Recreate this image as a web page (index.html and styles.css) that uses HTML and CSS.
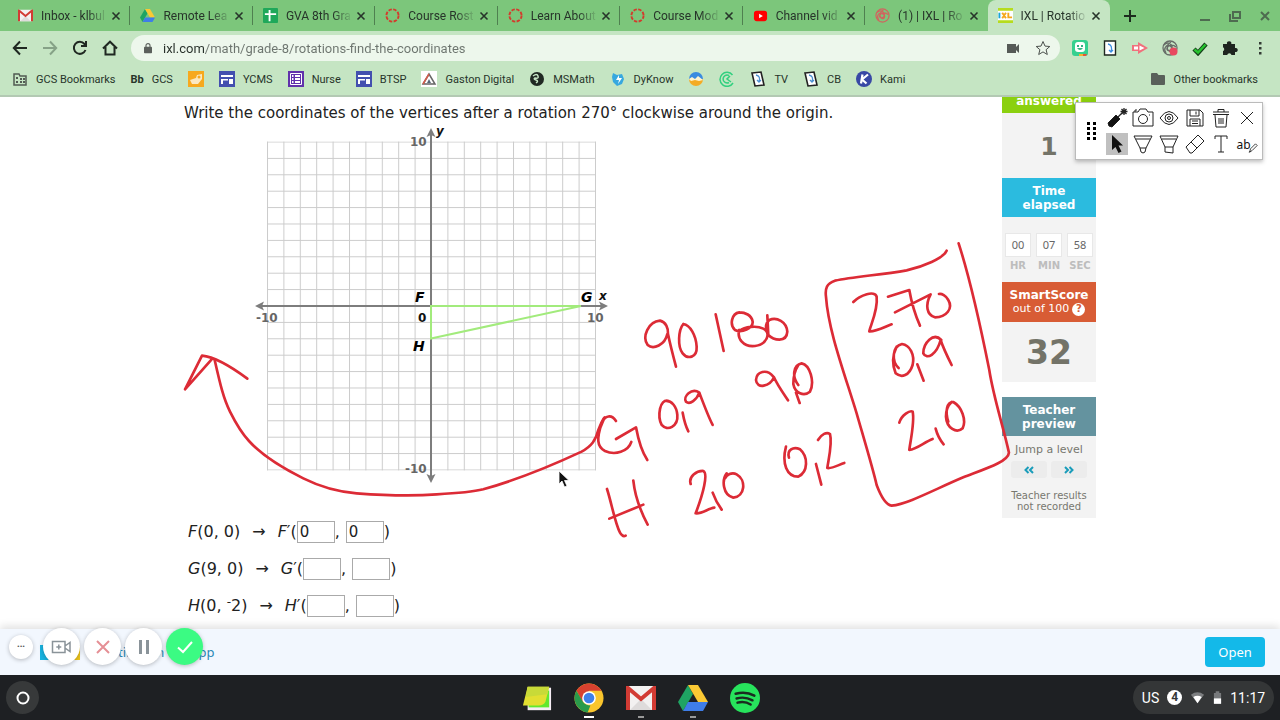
FILE: index.html
```html
<!DOCTYPE html>
<html lang="en">

<head>
    <meta charset="UTF-8" />
    <meta name="viewport" content="width=device-width, initial-scale=1.0" />
    <title>IXL | Rotations: find the coordinates</title>
    <link rel="stylesheet" href="styles.css">
</head>

<body>
    <svg class="defs" width="0" height="0">
        <symbol id="x" viewBox="0 0 10 10"><path d="M1.500 1.500l7 7m0-7l-7 7" fill="none" stroke="currentColor" stroke-width="1.600" /></symbol>
        <symbol id="canvas" viewBox="0 0 16 16"><circle cx="8" cy="8" r="6.500" fill="none" stroke="#d43a2c" stroke-width="2" stroke-dasharray="3.600 1.500" /></symbol>
        <symbol id="drive" viewBox="0 0 30 28">
            <path d="M10 1L0 18l5 9L15 10z" fill="#1fa463" />
            <path d="M10 1h10l10 17H20z" fill="#fbc934" />
            <path d="M10 18h20l-5 9H5z" fill="#3f7de8" />
        </symbol>
        <symbol id="gmail" viewBox="0 0 30 24">
            <rect width="30" height="24" rx="2" fill="#f3f1f1" />
            <path d="M4 24L15 13l11 11z" fill="#dedbdb" />
            <path d="M2 24V2l13 11L28 2v22" fill="none" stroke="#d23b34" stroke-width="4" />
        </symbol>
        <symbol id="site" viewBox="0 0 16 16"><path fill="#4350af" d="M0 0h16v16H0z" /><path fill="#fff" d="M2 4h12v2H2zm0 4h7v1.500H4V13H2zm8 0h4v5h-4z" /></symbol>
        <symbol id="page" viewBox="0 0 16 16"><path d="M2 2l9-1 3 13-9 1z" fill="#fff" stroke="#222" stroke-width="1.600" /><path d="M6 4q5 1 3 7m-2-2l2 2 2-2" fill="none" stroke="#4b8fd0" stroke-width="1.300" /></symbol>
        <symbol id="spiral" viewBox="0 0 16 16"><g fill="none" stroke="currentColor" stroke-width="1.300"><circle cx="8" cy="8" r="7" /><path d="M2 5c3-4 9-1 8 3s-6 3-5 0 6-4 9-1M4 13c-3-4 0-9 4-7s2 7-1 5-2-7 2-9" /></g></symbol>
    </svg>

    <header class="browser">
        <div class="tabstrip">
            <nav class="tabs">
                <div class="tab"><svg class="fav" viewBox="0 0 30 30"><use href="#gmail" y="3" width="30" height="24" /></svg><a href="#">Inbox - klbul</a><button aria-label="Close tab"><svg><use href="#x" /></svg></button></div>
                <div class="tab"><svg class="fav"><use href="#drive" /></svg><a href="#">Remote Lea</a><button aria-label="Close tab"><svg><use href="#x" /></svg></button></div>
                <div class="tab"><svg class="fav" viewBox="0 0 16 16"><rect width="16" height="16" rx="1" fill="#1fa85a" /><path d="M2 6.500h12M7 2v12" stroke="#fff" stroke-width="2" /></svg><a href="#">GVA 8th Gra</a><button aria-label="Close tab"><svg><use href="#x" /></svg></button></div>
                <div class="tab"><svg class="fav"><use href="#canvas" /></svg><a href="#">Course Rost</a><button aria-label="Close tab"><svg><use href="#x" /></svg></button></div>
                <div class="tab"><svg class="fav"><use href="#canvas" /></svg><a href="#">Learn About</a><button aria-label="Close tab"><svg><use href="#x" /></svg></button></div>
                <div class="tab"><svg class="fav"><use href="#canvas" /></svg><a href="#">Course Mod</a><button aria-label="Close tab"><svg><use href="#x" /></svg></button></div>
                <div class="tab"><svg class="fav" viewBox="0 0 16 16"><rect x="1" y="3" width="14" height="11" rx="3" fill="#f00" /><path d="M6.500 6v5l4-2.500z" fill="#fff" /></svg><a href="#">Channel vid</a><button aria-label="Close tab"><svg><use href="#x" /></svg></button></div>
                <div class="tab"><svg class="fav pink"><use href="#spiral" /></svg><a href="#">(1) | IXL | Ro</a><button aria-label="Close tab"><svg><use href="#x" /></svg></button></div>
                <div class="tab active"><svg class="fav" viewBox="0 0 16 16"><path fill="#fff" d="M0 0h16v16H0z" /><path fill="#b6dc1e" d="M0 0h16v3H0zm0 13h16v3H0z" /><path d="M1.500 5v6" stroke="#19a5d8" stroke-width="2" /><path d="M4.500 5l4 6m0-6l-4 6M11 5v5h4" fill="none" stroke="#f5a81c" stroke-width="2" /></svg><a href="#">IXL | Rotatio</a><button aria-label="Close tab"><svg><use href="#x" /></svg></button></div>
            </nav>
            <button class="new-tab" aria-label="New tab"><svg viewBox="0 0 12 12"><path d="M6 0v12M0 6h12" stroke="#1c2b1d" stroke-width="2" /></svg></button>
            <div class="window-buttons">
                <button aria-label="Minimize"><svg viewBox="0 0 12 12"><path d="M1 10h10" /></svg></button>
                <button aria-label="Restore"><svg viewBox="0 0 12 12"><path d="M4 2h7v6H4zM1 4v7h8" /></svg></button>
                <button aria-label="Close"><svg viewBox="0 0 12 12"><path d="M2 2l8 8m0-8l-8 8" /></svg></button>
            </div>
        </div>

        <div class="toolbar">
            <button aria-label="Back"><svg viewBox="0 0 16 16"><path d="M15 8H2m6-6.500L1.800 8 8 14.500" /></svg></button>
            <button class="dim" aria-label="Forward"><svg viewBox="0 0 16 16"><path d="M1 8h13M8 1.500L14.200 8 8 14.500" /></svg></button>
            <button aria-label="Reload"><svg viewBox="0 0 16 16"><path d="M13.500 10a6 6 0 1 1-1-6L14 5.500M14 1v5H9" /></svg></button>
            <button aria-label="Home"><svg viewBox="0 0 16 16"><path d="M1 8.500L8 1.700l7 6.800M3.500 7v7.500h9V7" /></svg></button>
            <div class="omnibox">
                <svg class="lock" viewBox="0 0 10 13"><path d="M1 5h8q1 0 1 1v6q0 1-1 1H1q-1 0-1-1V6q0-1 1-1z" fill="#5b605c" /><path d="M2.500 6V3.500a2.500 2.500 0 0 1 5 0V6" fill="none" stroke="#5b605c" stroke-width="1.400" /></svg>
                <input type="text" aria-label="Address" value="ixl.com/math/grade-8/rotations-find-the-coordinates">
                <button aria-label="Camera"><svg viewBox="0 0 16 16"><path fill="#555a56" stroke="none" d="M2 4h9v3l3-3v9l-3-3v3H2z" /></svg></button>
                <button aria-label="Bookmark this tab"><svg viewBox="0 0 16 16"><path class="thin" d="M8 1.500l2 4.600 4.800.4-3.700 3.200 1.200 4.800L8 11.900l-4.300 2.600 1.200-4.800L1.200 6.500l4.800-.4z" /></svg></button>
            </div>
            <button aria-label="Bitmoji"><svg viewBox="0 0 16 16"><g stroke="none"><rect width="16" height="16" rx="3" fill="#35d08f" /><rect x="3" y="2" width="10" height="10" rx="3" fill="#fff" /><path d="M5 5h2v2H5zm4 0h2v2H9zM5 8h6q-3 4-6 0z" fill="#35b083" /><path d="M7 14h4v2H7z" fill="#f5b32f" /><path d="M11 14h4l-1 2h-3z" fill="#e5533e" /></g></svg></button>
            <button aria-label="Page notes"><svg viewBox="0 0 16 16"><path d="M2.500 1h11v14h-11z" fill="#fff" stroke-width="1.400" /><path d="M6 4q5 1 3 8m-2-2l2 2 2-2" stroke="#3b8ee0" stroke-width="1.300" /></svg></button>
            <button aria-label="Screencastify"><svg viewBox="0 0 16 16"><path stroke="none" fill="#f1707c" d="M0 5h6V2l10 6-10 6v-3H0z" /><path stroke="none" fill="#fff" d="M2 6.500h4v3H2zM7.500 5.500l5 2.500-5 2.500z" /></svg></button>
            <button class="gray" aria-label="Swirl"><svg viewBox="0 0 16 16"><use href="#spiral" /><circle cx="11.500" cy="11.500" r="4" fill="#e8485f" stroke="none" /></svg></button>
            <button aria-label="Checker"><svg viewBox="0 0 16 16"><path d="M2 9l4 4 8-9" stroke="#14401a" stroke-width="4.500" /><path d="M2.500 9.500L6 12.500 13.500 4.500" stroke="#27c42f" stroke-width="2.500" /></svg></button>
            <button aria-label="Extensions"><svg viewBox="0 0 16 16"><path stroke="none" fill="#1e241f" d="M1 4h4a2.200 2.200 0 1 1 4.300 0H13v4a2.100 2.100 0 1 1 0 4v3H9.500a2.200 2.200 0 0 0-4.300 0H1v-4a2 2 0 0 0 0-3.700z" /></svg></button>
            <button aria-label="Menu"><svg viewBox="0 0 16 16"><path stroke="none" fill="#333a34" d="M7 2h2.500v2.500H7zM7 7h2.500v2.500H7zM7 12h2.500v2.500H7z" /></svg></button>
        </div>

        <nav class="bookmarks">
            <a href="#"><svg viewBox="0 0 16 16"><path d="M2 3h5l1 2h6v9H2z" fill="none" stroke="#525b53" stroke-width="1.500" /><path d="M4 6h2v2H4zm0 4h2v2H4zm4-3h2v2H8zm3 0h2v2h-2zM8 10h2v2H8zm3 0h2v2h-2z" fill="#525b53" /></svg>GCS Bookmarks</a>
            <a href="#"><b>Bb</b>GCS</a>
            <a href="#" aria-label="Pointer"><svg viewBox="0 0 16 16"><path fill="#f7a91e" d="M0 0h16v16H0z" /><path d="M2 9l6-2 1-3 5-1v5l-4 5H4z" fill="#fbe8c0" /><circle cx="11" cy="6" r="1.500" fill="#f7a91e" /></svg></a>
            <a href="#"><svg><use href="#site" /></svg>YCMS</a>
            <a href="#"><svg viewBox="0 0 16 16"><path fill="#6131ab" d="M0 0h16v16H0z" /><path d="M4 4h1.500v2H4zm3 0h5v2H7zM4 7h1.500v2H4zm3 0h5v2H7zm-3 3h1.500v2H4zm3 0h5v2H7z" fill="#fff" /><path d="M2.500 2.500h11v11h-11z" fill="none" stroke="#fff" /></svg>Nurse</a>
            <a href="#"><svg><use href="#site" /></svg>BTSP</a>
            <a href="#"><svg viewBox="0 0 16 16"><path fill="#fff" d="M0 0h16v16H0z" /><path d="M8 3l6 10H2z" fill="none" stroke="#666" stroke-width="1.500" /><path d="M8 3L2 13" stroke="#d25d4b" stroke-width="1.500" /><path d="M8 8l2 4H6z" fill="#567" /></svg>Gaston Digital</a>
            <a href="#"><svg viewBox="0 0 16 16"><circle cx="8" cy="8" r="7" fill="#202923" /><path d="M4 5q4-3 5 0t-3 2q-2 1 1 2 3 1 0 3" fill="none" stroke="#c6e5c5" stroke-width="1.500" /></svg>MSMath</a>
            <a href="#"><svg viewBox="0 0 16 16"><path d="M3 2l4 2 5-1 2 5-2 5-5 2-4-4-1-5z" fill="#38a8df" /><path d="M9 4L6 9h3l-1 4 4-6H9z" fill="#fff" /></svg>DyKnow</a>
            <a href="#" aria-label="Sunrise"><svg viewBox="0 0 16 16"><path d="M1 8a7 7 0 0 1 14 0z" fill="#3a8be0" /><path d="M1 8h14a7 7 0 0 1-14 0z" fill="#f4ab25" /><path d="M1 8l3-2 3 2 3-3 5 4-4 1-4-1-4 1z" fill="#fff3cf" /></svg></a>
            <a href="#" aria-label="Classkick"><svg viewBox="0 0 16 16"><path d="M13.500 4A7 7 0 1 0 14 12M11 5L8 8l4 3M10 4.500a4 4 0 1 0 0 7" fill="none" stroke="#31d07f" stroke-width="1.500" /></svg></a>
            <a href="#"><svg><use href="#page" /></svg>TV</a>
            <a href="#"><svg><use href="#page" /></svg>CB</a>
            <a href="#"><svg viewBox="0 0 16 16"><circle cx="8" cy="8" r="8" fill="#3848a5" /><path d="M6.500 3.500l-1.500 9M12 3.500L6 8.500l4.500 4" fill="none" stroke="#fff" stroke-width="2.200" /></svg>Kami</a>
            <a href="#" class="other"><svg viewBox="0 0 16 16"><path d="M1 3q0-1 1-1h5l1.500 2H14q1 0 1 1v8q0 1-1 1H2q-1 0-1-1z" fill="#59605a" /></svg>Other bookmarks</a>
        </nav>
    </header>

    <main class="page">
        <div class="content">
            <section class="worksheet">
                <h1>Write the coordinates of the vertices after a rotation 270° clockwise around the origin.</h1>
                <svg class="graph" viewBox="184 124 440 366">
                    <defs>
                        <pattern id="cells" x="267" y="141.500" width="16.400" height="16.400" patternUnits="userSpaceOnUse"><path d="M0 0h16.400M0 0v16.400" fill="none" stroke="#cbcbcb" stroke-width="2" /></pattern>
                    </defs>
                    <path fill="url(#cells)" d="M267 141.500h329v329H267z" />
                    <path d="M259 306h345M431 133v345" stroke="#7d7d7d" stroke-width="2" />
                    <path d="M255 306l9-4.500-2 4.500 2 4.500zM608 306l-9-4.500 2 4.500-2 4.500zM431 128l-4.500 9 4.500-2 4.500 2zM431 483l-4.500-9 4.500 2 4.500-2z" fill="#7d7d7d" />
                    <path d="M431 306h150L431 338.500z" fill="none" stroke="#a2eb7c" stroke-width="2" />
                    <g class="axis">
                        <text x="410" y="146">10</text>
                        <text x="405" y="473">-10</text>
                        <text x="256" y="322">-10</text>
                        <text x="587" y="322">10</text>
                        <text class="ink" x="418" y="322">0</text>
                        <text class="ink italic" x="436" y="135">y</text>
                        <text class="ink italic" x="599" y="300">x</text>
                    </g>
                    <g class="vertex">
                        <text x="415" y="302">F</text>
                        <text x="581" y="302">G</text>
                        <text x="413" y="351">H</text>
                    </g>
                </svg>
                <form class="answers">
                    <div class="answer"><i>F</i>(0, 0)<span class="arrow">→</span><i>F</i>′(<input type="text" aria-label="F prime x" value="0">,<input type="text" aria-label="F prime y" value="0">)</div>
                    <div class="answer"><i>G</i>(9, 0)<span class="arrow">→</span><i>G</i>′(<input type="text" aria-label="G prime x">,<input type="text" aria-label="G prime y">)</div>
                    <div class="answer"><i>H</i>(0, <sup>-</sup>2)<span class="arrow">→</span><i>H</i>′(<input type="text" aria-label="H prime x">,<input type="text" aria-label="H prime y">)</div>
                </form>
            </section>

            <aside class="stats">
                <h2 class="answered">answered</h2>
                <div class="count">1</div>
                <h2 class="time">Time<br>elapsed</h2>
                <div class="timer">
                    <div><span>00</span>HR</div>
                    <div><span>07</span>MIN</div>
                    <div><span>58</span>SEC</div>
                </div>
                <h2 class="smart">SmartScore<small>out of 100 <button aria-label="About SmartScore">?</button></small></h2>
                <div class="score">32</div>
                <h2 class="teacher">Teacher<br>preview</h2>
                <div class="jump">
                    <p>Jump a level</p>
                    <div class="levels">
                        <button aria-label="Previous level"><svg viewBox="0 0 10 8"><path d="M4.500 1L1.500 4l3 3M9 1L6 4l3 3" /></svg></button>
                        <button aria-label="Next level"><svg viewBox="0 0 10 8"><path d="M1 1l3 3-3 3M5.500 1l3 3-3 3" /></svg></button>
                    </div>
                    <small>Teacher results not recorded</small>
                </div>
            </aside>
        </div>
    </main>

    <div class="banner">
        <svg viewBox="0 0 40 15"><path fill="#19b3e0" d="M0 0h14v15H0z" /><path fill="#86c52a" d="M14 0h13v15H14z" /><path fill="#edc51c" d="M27 0h13v15H27z" /></svg>
        <a href="#">Continue in the app</a>
        <button>Open</button>
    </div>

    <footer class="shelf">
        <button class="launcher" aria-label="Launcher"><svg viewBox="0 0 14 14"><circle cx="7" cy="7" r="5.500" fill="none" stroke="#fff" stroke-width="2" /></svg></button>
        <div class="apps">
            <button aria-label="Sticky notes"><svg viewBox="0 0 32 32"><path d="M6 5h25v24H6z" fill="#f5ecf4" /><path d="M7 8h22v18H7z" fill="#62e82f" /><path d="M6 4h23l-4 16q-2 4-7 4H1z" fill="#e2df31" /><path d="M6 4h23l-2 8L4 15z" fill="#c8da38" /></svg></button>
            <button class="open current" aria-label="Chrome"><svg viewBox="0 0 32 32"><circle cx="16" cy="16" r="15.500" fill="#fac52d" /><path d="M2.600 8.200A15.500 15.500 0 0 1 29.400 8.200H16L9.200 20z" fill="#d8412f" /><path d="M2.600 8.200L9.500 20q3 4 8 4l-3 7.400A15.500 15.500 0 0 1 2.600 8.200z" fill="#2a9b4b" /><circle cx="16" cy="16" r="7.300" fill="#fff" /><circle cx="16" cy="16" r="5.700" fill="#4080ea" /></svg></button>
            <button class="open" aria-label="Gmail"><svg viewBox="0 0 30 30"><use href="#gmail" y="3" width="30" height="24" /></svg></button>
            <button class="open" aria-label="Drive"><svg><use href="#drive" /></svg></button>
            <button aria-label="Spotify"><svg viewBox="0 0 32 32"><circle cx="16" cy="16" r="16" fill="#27e35c" /><path d="M6 11.500q11-3 20 2M7 16.500q9-2.500 17 2M8 21q8-2 14 2" fill="none" stroke="#1b2b20" stroke-width="2.600" stroke-linecap="round" /></svg></button>
        </div>
        <button class="status">
            US <span class="badge">4</span>
            <svg viewBox="0 0 16 16"><path d="M1 5q7-5 14 0l-7 9z" fill="#7b7d7f" /><path d="M3.500 7.500q4.500-3 9 0L8 14z" fill="#fff" /></svg>
            <svg class="battery" viewBox="0 0 10 16"><path d="M3 1h4v2h2v12H1V3h2z" fill="#77797b" /><path d="M1 9h8v6H1z" fill="#fff" /></svg>
            11:17
        </button>
    </footer>

    <!-- pen strokes -->
    <svg class="pen" viewBox="0 0 1280 720">
        <g transform="translate(170 340) scale(.3333)">
            <path d="M125 58L45 148 96 47C125 50 170 70 232 116" />
            <path d="M134 60C150 130 160 175 180 215C200 255 220 285 237 303C275 345 340 385 400 415C450 440 500 455 560 460C640 466 740 468 800 463C860 460 900 458 940 448C1040 420 1160 370 1235 335C1265 318 1278 300 1285 270C1292 255 1296 240 1304 232" />
        </g>
        <g transform="translate(580 230) scale(.3333)">
            <path d="M108 573C95 553 75 555 65 580C50 625 50 650 75 663C105 677 145 665 154 636M108 627L168 592C175 630 185 665 202 690M54 610L72 566" />
            <path d="M81 777C95 820 105 880 120 908Q128 922 137 917M160 752C165 800 185 850 203 884M88 866L190 824" />
            <path d="M262 312C255 345 220 360 203 345C185 320 205 275 240 272C258 276 265 295 264 312C272 350 280 380 288 410M310 282C295 300 292 350 308 370C322 388 352 385 350 350C348 315 330 285 310 282M407 253L431 363" />
            <path d="M478 247C455 250 448 285 465 300C485 310 520 295 518 275C515 255 495 247 478 247M478 300C470 325 490 352 525 348C560 343 575 310 550 296C530 286 495 290 478 303M562 256L565 315C580 330 620 340 622 305C620 275 590 260 568 270C550 285 560 305 565 315" />
            <path d="M266 513C238 505 232 560 245 585C262 605 295 590 292 555C290 530 275 510 255 513M308 548C312 570 318 590 325 604M358 488C335 472 308 500 318 515C330 525 350 510 358 488C370 520 385 560 398 585" />
            <path d="M580 440C560 415 530 425 528 450C530 478 570 470 582 442C592 465 610 490 624 511M648 488L659 519M655 465C635 440 640 405 665 400C690 405 705 455 690 485C672 500 645 490 640 462C640 440 642 425 655 405" />
            <path d="M332 762C325 740 350 722 370 723C385 730 370 790 347 850C365 853 385 835 403 833M398 788C405 808 415 825 425 839M440 730C425 750 428 795 460 803C495 800 500 750 470 733C455 725 440 735 435 745" />
            <path d="M627 683C620 660 640 648 660 658C685 680 685 725 655 740C620 740 605 700 618 650M708 702L724 764M714 630C725 612 740 605 750 612C758 640 745 690 742 714C755 717 775 705 793 699" />
            <path d="M820 216C840 195 885 180 890 200C895 240 870 290 868 304C890 305 915 290 935 283M924 200L988 180C995 220 1008 260 1020 287M945 247L1052 193C1035 225 1040 255 1065 262C1100 262 1120 235 1105 210C1098 197 1085 190 1077 192" />
            <path d="M956 414C935 395 935 350 966 342C990 345 1005 375 998 405C988 437 965 445 947 430C935 400 940 370 950 350M1012 403L1031 452M1084 330C1060 305 1030 340 1030 370C1040 390 1070 375 1082 330C1090 355 1105 385 1115 405" />
            <path d="M958 578C965 555 990 540 998 545C1005 575 990 640 988 660C1010 658 1035 635 1058 627M1067 596C1072 615 1080 630 1091 643M1105 575C1095 545 1100 515 1120 516C1145 530 1160 570 1148 595C1130 612 1100 595 1098 560C1098 540 1105 525 1115 516" />
            <path d="M1100 62C1090 85 1030 110 980 121C900 135 820 140 765 152C740 160 735 175 738 200C745 300 790 420 830 550C850 620 880 720 890 765C905 805 920 825 935 827C985 822 1060 780 1150 742C1220 715 1285 695 1287 668C1270 590 1240 500 1228 420C1200 280 1165 130 1136 40" />
        </g>
    </svg>

    <div class="palette">
        <svg class="grip" viewBox="0 0 10 18"><path d="M0 0h3v3H0zm6 0h3v3H6zM0 5h3v3H0zm6 0h3v3H6zM0 10h3v3H0zm6 0h3v3H6zM0 15h3v3H0zm6 0h3v3H6z" /></svg>
        <div class="tools">
            <button aria-label="Laser pointer"><svg viewBox="0 0 22 22"><path d="M2 16l8-8 4 4-8 8q-4 0-4-4z" fill="#111" /><path d="M12 10l5-5M18 1v7M14.500 4.500h7M15.500 2l5 5m0-5l-5 5" stroke-width="1.300" /></svg></button>
            <button aria-label="Screenshot"><svg viewBox="0 0 22 22"><path d="M1 5h5l2-3h6l2 3h5v14H1z" /><circle cx="11" cy="12" r="4.500" /><path d="M17 8h1M3 5V3h2" /></svg></button>
            <button aria-label="Show"><svg viewBox="0 0 22 22"><path d="M2 11q9-13 18 0-9 13-18 0z" /><circle cx="11" cy="11" r="4" /><circle cx="11" cy="11" r="1.500" /></svg></button>
            <button aria-label="Save"><svg viewBox="0 0 22 22"><path d="M3 3h13l3 3v13H3zM6 3v6h9V3M6 19v-7h10v7M8 14h6M8 16.500h6M12 4.500v3" /></svg></button>
            <button aria-label="Clear"><svg viewBox="0 0 22 22"><path d="M3 5h16M3 7.500h16M8 5V2.500h6V5M5 8l1 12h10l1-12M9 11v6M11 11v6M13 11v6" /></svg></button>
            <button aria-label="Close tools"><svg viewBox="0 0 22 22"><path d="M5 5l12 12m0-12L5 17" /></svg></button>
            <button class="picked" aria-label="Pointer"><svg viewBox="0 0 22 22"><path d="M6 2v15l3.500-3 3 6 3-1.500-3-6h4.500z" fill="#111" stroke="none" /></svg></button>
            <button aria-label="Pen"><svg viewBox="0 0 22 22"><path d="M2 3h18l-6 12-1 4q-2 2-4 0l-1-4zM4 6h14M8 15h6" /></svg></button>
            <button aria-label="Highlighter"><svg viewBox="0 0 22 22"><path d="M2 3h18l-5 11v6l-8-1v-5zM4 6h14M7 14h8" /></svg></button>
            <button aria-label="Eraser"><svg viewBox="0 0 22 22"><path d="M2 14L14 2l6 6L8 20H6zM7 9l6 6" /></svg></button>
            <button aria-label="Text"><svg viewBox="0 0 22 22"><path d="M5 6V3h12v3M11 3v16M8 19h6" /></svg></button>
            <button class="spell" aria-label="Spelling">ab<svg viewBox="0 0 12 12"><path d="M2 11l1-4 6-6 2 2-6 6zM1 11l2-1" /></svg></button>
        </div>
    </div>

    <div class="recorder">
        <button class="more" aria-label="More">•••</button>
        <button aria-label="Camera"><svg viewBox="0 0 22 18"><path d="M1.500 3.500H14v11H1.500zM14 8l5-3.500v9L14 10M7.800 6.500v5M5.300 9h5" /></svg></button>
        <button class="cancel" aria-label="Cancel"><svg viewBox="0 0 22 18"><path d="M5 3l12 12m0-12L5 15" /></svg></button>
        <button class="pause" aria-label="Pause"><svg viewBox="0 0 22 18"><path d="M7.500 2v14M14.500 2v14" /></svg></button>
        <button class="done" aria-label="Finish"><svg viewBox="0 0 22 18"><path d="M4 9.500l5 4.500 9-10" /></svg></button>
    </div>

    <svg class="mouse" viewBox="0 0 12 18"><path d="M1 1v13l3-3 2.500 6 2.500-1-2.500-5.500H11z" fill="#111" stroke="#fff" stroke-width=".8" /></svg>
</body>

</html>
```
FILE: styles.css
```css
* {
    box-sizing: border-box;
}

body {
    margin: 0;
    min-height: 100vh;
    display: flex;
    flex-direction: column;
    position: relative;
    font-family: Roboto, sans-serif;
    font-size: 12px;
    color: #27342a;
    background: #fff;
    overflow: hidden;
}

button {
    padding: 0;
    border: none;
    background: none;
    font: inherit;
    color: inherit;
    display: flex;
    align-items: center;
    justify-content: center;
}

a {
    color: inherit;
    text-decoration: none;
}

.defs {
    position: absolute;
}

/* browser */
.browser {
    background: #c5e5c3;
    border-bottom: 2px solid #b3c9b3;
}

.tabstrip {
    display: flex;
    height: 31px;
    padding-left: 8px;
    background: #7cc67b;
}

.tabs {
    display: flex;
    flex: 0 1 1102px;
    min-width: 0;
}

.tab {
    flex: 1;
    min-width: 0;
    display: flex;
    align-items: center;
    padding: 0 9px 0 10px;
    position: relative;
}

.tab:not(.active)::after {
    content: "";
    position: absolute;
    right: 0;
    top: 6px;
    height: 19px;
    border-right: 1px solid #4f8050;
}

.tab:nth-child(8)::after {
    display: none;
}

.tab.active {
    background: #c5e5c3;
    border-radius: 8px 8px 0 0;
}

.tab a {
    flex: 1;
    min-width: 0;
    margin-left: 8px;
    white-space: nowrap;
    -webkit-mask-image: linear-gradient(to right, #000 70%, transparent);
    mask-image: linear-gradient(to right, #000 70%, transparent);
}

.fav {
    width: 15px;
    height: 15px;
    flex: none;
}

.pink {
    color: #d0655f;
}

.tab button {
    margin-left: 3px;
}

.tab button svg {
    width: 10px;
    height: 10px;
}

.new-tab {
    width: 40px;
}

.new-tab svg,
.window-buttons svg {
    width: 12px;
    height: 12px;
}

.window-buttons {
    display: flex;
    margin-left: auto;
}

.window-buttons button {
    width: 30px;
}

.window-buttons path {
    fill: none;
    stroke: #4e6b50;
    stroke-width: 2;
}

.toolbar {
    display: flex;
    align-items: center;
    height: 34px;
    padding: 0 5px;
}

.toolbar button {
    width: 30px;
    height: 26px;
    flex: none;
}

.toolbar button svg {
    width: 16px;
    height: 16px;
    fill: none;
    stroke: #1f2821;
    stroke-width: 2;
}

.toolbar .dim svg {
    stroke: #86a287;
}

.toolbar .gray {
    color: #666c67;
}

.toolbar .thin {
    stroke: #4b504c;
    stroke-width: 1;
}

.omnibox {
    flex: 1;
    display: flex;
    align-items: center;
    height: 26px;
    margin: 0 5px 0 6px;
    padding: 0 2px 0 13px;
    background: #edf7ec;
    border-radius: 13px;
}

.lock {
    width: 8px;
    height: 12px;
}

.omnibox input {
    flex: 1;
    min-width: 0;
    margin-left: 11px;
    padding: 0;
    border: none;
    outline: none;
    font: 13px Roboto, sans-serif;
    color: transparent;
    background: linear-gradient(to right, #27302a 42px, #6c746e 42px);
    -webkit-background-clip: text;
    background-clip: text;
}

.bookmarks {
    display: flex;
    align-items: center;
    gap: 15px;
    height: 30px;
    padding: 0 22px 2px 12px;
    font-size: 11px;
}

.bookmarks a {
    display: flex;
    align-items: center;
    gap: 8px;
    white-space: nowrap;
}

.bookmarks svg {
    width: 16px;
    height: 16px;
}

.bookmarks .other {
    margin-left: auto;
}

/* exercise page */
.page {
    flex: 1;
    overflow: hidden;
    font-family: "DejaVu Sans", sans-serif;
    color: #222;
}

.content {
    display: flex;
    max-width: 912px;
    margin: 0 auto;
}

.worksheet {
    flex: 1;
}

h1 {
    margin: 6px 0 0;
    font-size: 15px;
    font-weight: normal;
    line-height: 21px;
    white-space: nowrap;
}

.graph {
    display: block;
    width: 440px;
    height: 366px;
}

.axis {
    font-size: 12px;
    font-weight: bold;
    fill: #666;
}

.axis .ink {
    fill: #111;
}

.vertex,
.axis .italic {
    font-style: italic;
}

.vertex {
    font-size: 14px;
    font-weight: bold;
    fill: #000;
}

.answers {
    padding: 23px 0 0 4px;
}

.answer {
    display: flex;
    align-items: center;
    height: 37px;
    font-size: 16px;
    white-space: pre;
}

.answer sup {
    font-size: 12px;
    line-height: 12px;
    align-self: flex-start;
    margin-top: 9px;
}

.arrow {
    margin: 0 12px;
}

.answer input {
    width: 38px;
    height: 22px;
    padding: 0 2px;
    border: 1px solid #aaa;
    font: inherit;
    font-size: 15px;
    color: inherit;
}

.answer input + input {
    margin-left: 6px;
}

.stats {
    width: 94px;
    text-align: center;
}

.stats h2 {
    margin: 0;
    padding: 6px 0 5px;
    font-size: 12px;
    line-height: 14px;
    color: #fff;
}

.stats .answered {
    display: flex;
    align-items: center;
    justify-content: center;
    height: 16px;
    padding: 0 0 8px;
    background: #8bd00f;
}

.stats .time {
    background: #2bbbdf;
}

.stats .smart {
    padding: 6px 0;
    background: #d85c35;
}

.stats .teacher {
    margin-top: 15px;
    background: #64939f;
}

.smart small {
    display: flex;
    align-items: center;
    justify-content: center;
    gap: 3px;
    font-size: 11px;
    font-weight: normal;
}

.smart button {
    width: 13px;
    height: 13px;
    border-radius: 50%;
    background: #fff;
    color: #d85c35;
    font-size: 10px;
    font-weight: bold;
}

.count,
.score {
    display: flex;
    align-items: center;
    justify-content: center;
    font-weight: bold;
    color: #737368;
    background: #f3f3f3;
}

.count {
    height: 65px;
    padding-top: 2px;
    font-size: 25px;
}

.score {
    height: 60px;
    font-size: 33px;
}

.timer {
    display: flex;
    justify-content: center;
    gap: 5px;
    height: 65px;
    padding-top: 16px;
    background: #f3f3f3;
    font-size: 10px;
    font-weight: bold;
    line-height: 17px;
    color: #bdbdbd;
}

.timer div {
    width: 26px;
}

.timer span {
    display: block;
    height: 24px;
    border: 1px solid #e8e8e8;
    background: #fff;
    font: 11px/22px "Noto Sans", sans-serif;
    color: #666;
}

.jump {
    height: 82px;
    padding-top: 7px;
    background: #f3f3f3;
    color: #77776f;
}

.jump p {
    margin: 0 0 4px;
    font-size: 11px;
    line-height: 14px;
}

.jump small {
    display: block;
    padding: 0 8px;
    font-size: 10px;
    line-height: 11px;
}

.levels {
    display: flex;
    justify-content: center;
    gap: 4px;
    margin-bottom: 12px;
}

.levels button {
    width: 36px;
    height: 17px;
    border-radius: 3px;
    background: #ececec;
}

.levels svg {
    width: 10px;
    height: 8px;
    fill: none;
    stroke: #199cba;
    stroke-width: 2;
}

/* bottom bars */
.banner {
    display: flex;
    align-items: center;
    height: 46px;
    padding: 0 15px 0 40px;
    background: #f2f7fe;
    box-shadow: 0 -3px 8px rgba(0, 0, 0, 0.12);
    font-family: "Noto Sans", sans-serif;
}

.banner svg {
    width: 40px;
    height: 15px;
}

.banner a {
    margin-left: 14px;
    font-size: 13px;
    color: #2b88b5;
}

.banner button {
    width: 60px;
    height: 30px;
    margin-left: auto;
    border-radius: 4px;
    background: #13b9e9;
    color: #fff;
    font-size: 13px;
}

.shelf {
    display: flex;
    align-items: center;
    justify-content: space-between;
    height: 45px;
    padding: 0 6px;
    background: #1e2023;
    color: #fff;
}

.launcher {
    width: 33px;
    height: 33px;
    margin-right: 110px;
    border-radius: 50%;
    background: #37393a;
}

.launcher svg {
    width: 14px;
    height: 14px;
}

.apps {
    display: flex;
    gap: 22px;
}

.apps button {
    width: 30px;
    height: 45px;
    position: relative;
}

.apps svg {
    width: 30px;
    height: 30px;
}

.apps .open::after {
    content: "";
    position: absolute;
    bottom: 2px;
    width: 6px;
    height: 2px;
    background: #999;
}

.apps .current::after {
    width: 10px;
    background: #fff;
}

.status {
    width: 141px;
    height: 33px;
    gap: 8px;
    border-radius: 17px;
    background: #343637;
    font-size: 14px;
    white-space: nowrap;
}

.status svg {
    width: 15px;
    height: 15px;
}

.status .battery {
    width: 9px;
}

.badge {
    width: 15px;
    border-radius: 50%;
    background: #fff;
    color: #343637;
    font-size: 12px;
    font-weight: bold;
    line-height: 15px;
}

/* things floating over the page */
.pen {
    position: absolute;
    top: 0;
    left: 0;
    width: 1280px;
    height: 720px;
    fill: none;
    stroke: #dc2b36;
    stroke-width: 8;
    stroke-linecap: round;
    stroke-linejoin: round;
    pointer-events: none;
}

.palette {
    position: absolute;
    top: 102px;
    right: 17px;
    display: flex;
    align-items: center;
    padding: 4px 4px 4px 11px;
    background: #fff;
    border: 1px solid #bbb;
    box-shadow: 0 2px 4px rgba(0, 0, 0, 0.25);
}

.grip {
    width: 10px;
    height: 18px;
    margin-right: 9px;
}

.tools {
    display: grid;
    grid-template-columns: repeat(6, 22px);
    gap: 4px;
}

.tools button {
    height: 22px;
}

.tools svg {
    width: 22px;
    height: 22px;
    fill: none;
    stroke: #222;
}

.picked {
    background: #c0c0c0;
}

.tools .spell {
    font-family: "Noto Sans", sans-serif;
    color: #111;
}

.tools .spell svg {
    flex: none;
    width: 10px;
    height: 10px;
    margin: 8px 0 0 -3px;
}

.recorder {
    position: absolute;
    left: 9px;
    bottom: 55px;
    display: flex;
    align-items: center;
    gap: 4px;
}

.recorder button {
    width: 37px;
    height: 37px;
    border-radius: 50%;
    background: #fff;
    box-shadow: 0 1px 4px rgba(0, 0, 0, 0.25);
}

.recorder .more {
    width: 24px;
    height: 24px;
    margin-right: 6px;
    font-size: 8px;
    color: #555;
}

.recorder svg {
    width: 22px;
    height: 18px;
    fill: none;
    stroke: #8a9399;
    stroke-width: 1.5;
}

.recorder .cancel svg {
    stroke: #e58f95;
    stroke-width: 2;
}

.recorder .pause svg {
    stroke-width: 3;
}

.recorder .done {
    background: #3bfb83;
}

.recorder .done svg {
    stroke: #fff;
    stroke-width: 2;
}

.mouse {
    position: absolute;
    top: 470px;
    left: 558px;
    width: 12px;
    height: 18px;
}
```
